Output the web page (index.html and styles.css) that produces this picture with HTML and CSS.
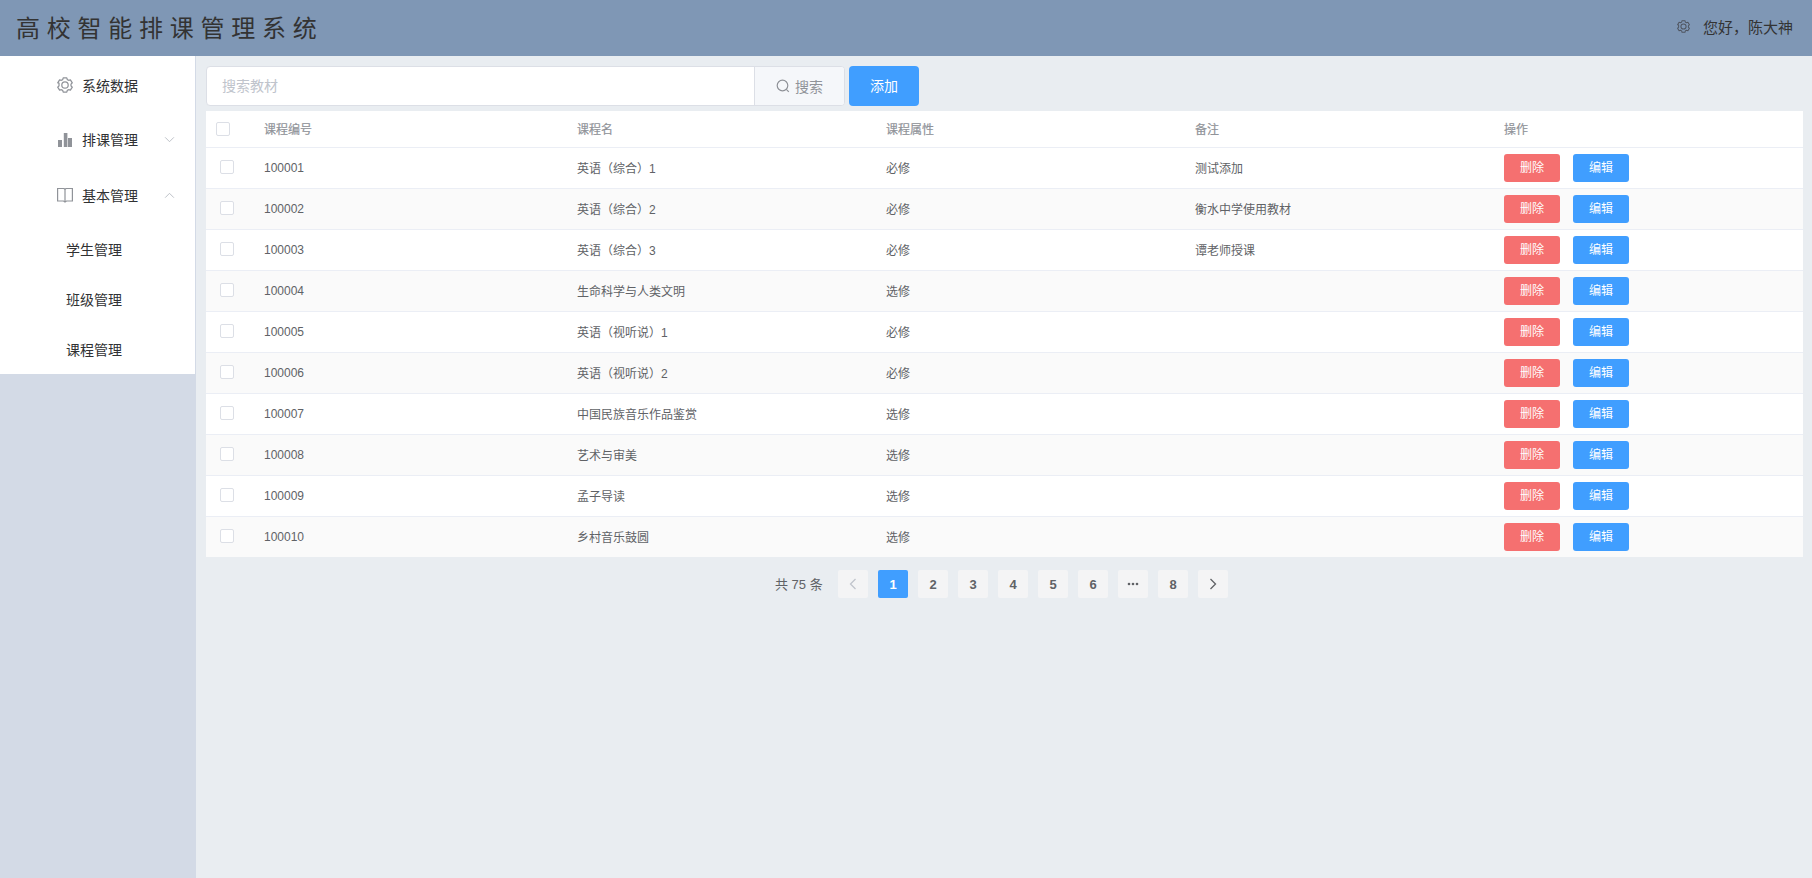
FILE: index.html
```html
<!DOCTYPE html>
<html lang="zh-CN">
<head>
<meta charset="utf-8">
<title>高校智能排课管理系统</title>
<link rel="stylesheet" href="styles.css">
</head>
<body>
<header class="topbar">
  <h1 class="brand">高校智能排课管理系统</h1>
  <div class="user">
    <svg class="user-gear" viewBox="0 0 16 16"><use href="#gear"/></svg>
    <span>您好，陈大神</span>
  </div>
</header>
<svg class="defs" width="0" height="0">
  <symbol id="gear" viewBox="0 0 16 16">
    <path fill="none" stroke="currentColor" stroke-width="1.250" stroke-linejoin="round" d="M6.200.8h3.600l.5 1.800 1.300.7 1.800-.5 1.900 3-1.300 1.300v1.800l1.300 1.300-1.900 3-1.800-.5-1.300.7-.5 1.800H6.200l-.5-1.800-1.300-.7-1.800.5-1.900-3 1.300-1.300V6.100L.7 5.800l1.900-3 1.800.5 1.300-.7z"/>
    <circle cx="8" cy="8" r="3.200" fill="none" stroke="currentColor" stroke-width="1.250"/>
  </symbol>
</svg>
<div class="layout">
  <aside class="sidebar">
    <nav class="menu">
      <div class="menu-item first">
        <svg class="menu-icon" viewBox="0 0 16 16"><use href="#gear"/></svg>
        <span>系统数据</span>
      </div>
      <div class="menu-item">
        <svg class="menu-icon" viewBox="0 0 16 16"><path fill="currentColor" d="M1 9h4v7H1zM6.800 2h3.600v14H6.800zM11 7h4v9h-4z"/></svg>
        <span>排课管理</span>
        <svg class="chevron" viewBox="0 0 12 8"><path fill="none" stroke="currentColor" d="M1 1.500l5 5 5-5"/></svg>
      </div>
      <div class="menu-item">
        <svg class="menu-icon" viewBox="0 0 16 16"><path fill="none" stroke="currentColor" stroke-width="1.200" d="M.6 1.500h6.400L8 2.500l1-1h6.400v12.500H9.500L8 15l-1.500-1H.6zM8 2.500V15"/></svg>
        <span>基本管理</span>
        <svg class="chevron" viewBox="0 0 12 8"><path fill="none" stroke="currentColor" d="M1 6.500l5-5 5 5"/></svg>
      </div>
      <div class="sub-item">学生管理</div>
      <div class="sub-item">班级管理</div>
      <div class="sub-item">课程管理</div>
    </nav>
  </aside>
  <main class="content">
    <div class="toolbar">
      <div class="search">
        <input class="search-input" type="text" placeholder="搜索教材">
        <div class="search-btn">
          <svg class="search-icon" viewBox="0 0 14 14"><circle cx="6.500" cy="6.500" r="5.300" fill="none" stroke="currentColor" stroke-width="1.200"/><path stroke="currentColor" stroke-width="1.200" d="M10.300 10.300l2.500 2.500"/></svg>
          <span>搜索</span>
        </div>
      </div>
      <button class="add-btn">添加</button>
    </div>
    <table class="grid">
      <colgroup>
        <col class="col-check"><col class="col-code"><col class="col-std"><col class="col-std"><col class="col-std"><col class="col-std">
      </colgroup>
      <thead>
        <tr><th class="check-h"><span class="box"></span></th><th>课程编号</th><th>课程名</th><th>课程属性</th><th>备注</th><th>操作</th></tr>
      </thead>
      <tbody>
        <tr><td class="check"><span class="box"></span></td><td>100001</td><td>英语（综合）1</td><td>必修</td><td>测试添加</td><td><span class="btn del">删除</span><span class="btn edit">编辑</span></td></tr>
        <tr><td class="check"><span class="box"></span></td><td>100002</td><td>英语（综合）2</td><td>必修</td><td>衡水中学使用教材</td><td><span class="btn del">删除</span><span class="btn edit">编辑</span></td></tr>
        <tr><td class="check"><span class="box"></span></td><td>100003</td><td>英语（综合）3</td><td>必修</td><td>谭老师授课</td><td><span class="btn del">删除</span><span class="btn edit">编辑</span></td></tr>
        <tr><td class="check"><span class="box"></span></td><td>100004</td><td>生命科学与人类文明</td><td>选修</td><td></td><td><span class="btn del">删除</span><span class="btn edit">编辑</span></td></tr>
        <tr><td class="check"><span class="box"></span></td><td>100005</td><td>英语（视听说）1</td><td>必修</td><td></td><td><span class="btn del">删除</span><span class="btn edit">编辑</span></td></tr>
        <tr><td class="check"><span class="box"></span></td><td>100006</td><td>英语（视听说）2</td><td>必修</td><td></td><td><span class="btn del">删除</span><span class="btn edit">编辑</span></td></tr>
        <tr><td class="check"><span class="box"></span></td><td>100007</td><td>中国民族音乐作品鉴赏</td><td>选修</td><td></td><td><span class="btn del">删除</span><span class="btn edit">编辑</span></td></tr>
        <tr><td class="check"><span class="box"></span></td><td>100008</td><td>艺术与审美</td><td>选修</td><td></td><td><span class="btn del">删除</span><span class="btn edit">编辑</span></td></tr>
        <tr><td class="check"><span class="box"></span></td><td>100009</td><td>孟子导读</td><td>选修</td><td></td><td><span class="btn del">删除</span><span class="btn edit">编辑</span></td></tr>
        <tr><td class="check"><span class="box"></span></td><td>100010</td><td>乡村音乐鼓圆</td><td>选修</td><td></td><td><span class="btn del">删除</span><span class="btn edit">编辑</span></td></tr>
      </tbody>
    </table>
    <div class="pager">
      <span class="total">共 75 条</span>
      <span class="page off"><svg class="arrow" viewBox="0 0 8 12"><path fill="none" stroke="currentColor" stroke-width="1.300" d="M6.500 1l-5 5 5 5"/></svg></span>
      <span class="page on">1</span>
      <span class="page">2</span>
      <span class="page">3</span>
      <span class="page">4</span>
      <span class="page">5</span>
      <span class="page">6</span>
      <span class="page"><svg class="dots" viewBox="0 0 12 4"><circle cx="2" cy="2" r="1.300"/><circle cx="6" cy="2" r="1.300"/><circle cx="10" cy="2" r="1.300"/></svg></span>
      <span class="page">8</span>
      <span class="page"><svg class="arrow" viewBox="0 0 8 12"><path fill="none" stroke="currentColor" stroke-width="1.300" d="M1.500 1l5 5-5 5"/></svg></span>
    </div>
  </main>
</div>
</body>
</html>
```
FILE: styles.css
```css
* { box-sizing: border-box; }
html, body { margin: 0; height: 100%; overflow: hidden; }
body {
  font-family: "Liberation Sans", "Noto Sans CJK SC", sans-serif;
  color: #303133;
  background: #e9edf1;
}
.defs { position: absolute; }
.topbar {
  height: 56px;
  background: #7f97b5;
  display: flex;
  align-items: center;
  justify-content: space-between;
  padding: 0 19px 4px 16px;
}
.brand {
  margin: 0;
  font-size: 24px;
  font-weight: 400;
  letter-spacing: 6.750px;
  color: #333;
}
.user {
  display: flex;
  align-items: center;
  gap: 13px;
  font-size: 15px;
  color: #333;
}
.user-gear { width: 13px; height: 13px; color: #4f5560; }
.layout { display: flex; height: 822px; }
.sidebar { width: 196px; background: #d3dae6; flex: none; }
.menu { background: #fff; width: 195px; height: 318px; }
.menu-item {
  height: 56px;
  display: flex;
  align-items: center;
  padding-left: 57px;
  padding-bottom: 2px;
  font-size: 14px;
  color: #303133;
  position: relative;
}
.menu-item.first { padding-bottom: 0; padding-top: 2px; }
.menu-icon { width: 16px; height: 16px; margin-right: 9px; color: #909399; flex: none; }
.chevron { position: absolute; left: 164px; top: 24px; width: 11px; height: 7px; color: #b4b8bf; }
.sub-item {
  height: 50px;
  line-height: 52px;
  padding-left: 66px;
  font-size: 14px;
  color: #303133;
}
.content { flex: 1; padding: 10px 9px 0 10px; min-width: 0; }
.toolbar { display: flex; height: 45px; gap: 4px; align-items: flex-start; }
.search {
  width: 639px;
  height: 40px;
  display: flex;
  border: 1px solid #dcdfe6;
  border-radius: 4px;
  background: #fff;
  overflow: hidden;
}
.search-input {
  flex: 1;
  min-width: 0;
  border: 0;
  outline: 0;
  padding: 0 15px;
  font: 14px "Liberation Sans", "Noto Sans CJK SC", sans-serif;
  color: #606266;
  background: transparent;
}
.search-input::placeholder { color: #c0c4cc; }
.search-btn {
  width: 90px;
  flex: none;
  display: flex;
  align-items: center;
  justify-content: center;
  gap: 5px;
  background: #f5f7fa;
  border-left: 1px solid #dcdfe6;
  color: #909399;
  font-size: 14px;
}
.search-icon { width: 14px; height: 14px; }
.add-btn {
  width: 70px;
  height: 40px;
  border: 0;
  border-radius: 4px;
  background: #409eff;
  color: #fff;
  font: 14px "Liberation Sans", "Noto Sans CJK SC", sans-serif;
  padding: 0 0 2px;
}
.grid {
  width: 1597px;
  table-layout: fixed;
  border-collapse: collapse;
  background: #fff;
  font-size: 12px;
  color: #606266;
}
.col-check { width: 48px; }
.col-code { width: 313px; }
.col-std { width: 309px; }
.grid th {
  height: 36px;
  padding: 0 10px;
  text-align: left;
  color: #909399;
  border-bottom: 1px solid #ebeef5;
  font-weight: 400;
  -webkit-text-stroke: 0.2px #909399;
}
.grid td {
  height: 41px;
  padding: 0 10px;
  border-bottom: 1px solid #ebeef5;
}
.grid tbody tr:nth-child(even) { background: #fafafa; }
.grid tbody tr:last-child td { border-bottom: 0; }
.box {
  display: block;
  width: 14px;
  height: 14px;
  border: 1px solid #dcdfe6;
  border-radius: 2px;
  background: #fff;
}
.grid .check { padding-left: 14px; }
.grid .check .box { margin-top: -1px; }
.grid .check-h { padding-left: 10px; }
.btn {
  display: inline-block;
  width: 56px;
  height: 28px;
  line-height: 28px;
  text-align: center;
  border-radius: 3px;
  color: #fff;
  font-size: 12px;
  vertical-align: middle;
}
.del { background: #f56c6c; opacity: .97; }
.edit { background: #409eff; margin-left: 13px; }
.pager {
  display: flex;
  align-items: center;
  height: 28px;
  margin-top: 13px;
  padding-left: 569px;
  gap: 10px;
  font-size: 13px;
  color: #606266;
}
.total { width: 53px; white-space: nowrap; padding-bottom: 2px; }
.page {
  width: 30px;
  height: 28px;
  display: flex;
  align-items: center;
  justify-content: center;
  background: #f4f4f5;
  border-radius: 2px;
  font-weight: 700;
  color: #606266;
}
.page.on { background: #409eff; color: #fff; }
.page.off { color: #c0c4cc; }
.arrow { width: 8px; height: 12px; }
.dots { width: 12px; height: 4px; fill: #606266; }
```
